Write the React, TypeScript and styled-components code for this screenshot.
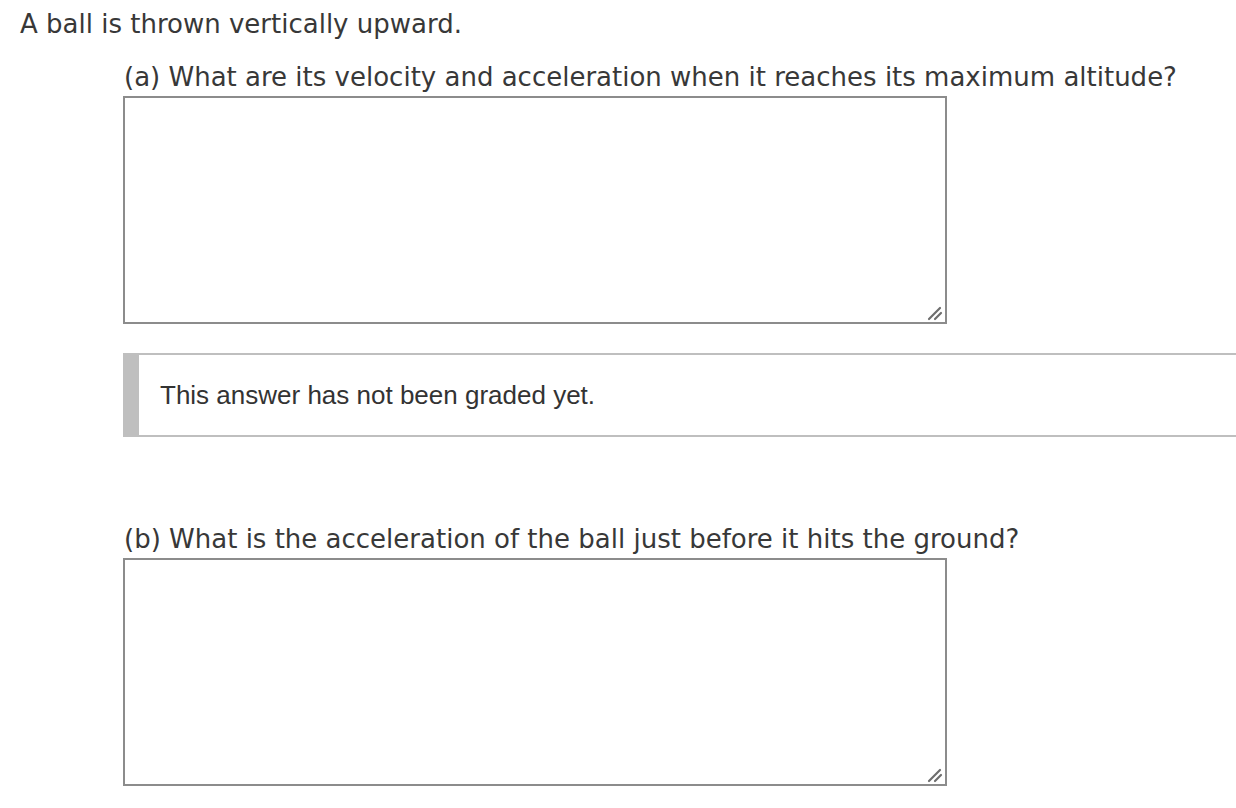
import React from 'react';
import styled, { createGlobalStyle } from 'styled-components';

const GlobalStyle = createGlobalStyle`
  html, body {
    margin: 0;
    padding: 0;
    background: #ffffff;
  }
  body {
    font-family: "DejaVu Sans", Verdana, sans-serif;
    color: #333333;
  }
`;

const Page = styled.div`
  padding-top: 8px;
`;

const Prompt = styled.div`
  font-size: 26px;
  line-height: 32px;
  padding-left: 20px;
  color: #383838;
`;

const Part = styled.div<{ $gap: number }>`
  margin-left: 123px;
  margin-top: ${(p) => p.$gap}px;
`;

const Question = styled.div`
  font-size: 26px;
  line-height: 32px;
  color: #383838;
  padding-left: 1px;
`;

const AnswerWrap = styled.div`
  position: relative;
  width: 824px;
  height: 228px;
  margin-top: 3px;
`;

const Answer = styled.textarea`
  display: block;
  box-sizing: border-box;
  width: 100%;
  height: 100%;
  margin: 0;
  border: 2px solid #8c8c8c;
  border-radius: 0;
  background: #ffffff;
  font-family: "DejaVu Sans", Verdana, sans-serif;
  font-size: 20px;
  outline: none;
  resize: none;
`;

const Grip = styled.svg`
  position: absolute;
  right: 4px;
  bottom: 3px;
  width: 16px;
  height: 16px;
  pointer-events: none;
`;

const Feedback = styled.div`
  box-sizing: border-box;
  display: flex;
  align-items: center;
  height: 84px;
  margin-top: 29px;
  border-top: 2px solid #bfbfbf;
  border-bottom: 2px solid #bfbfbf;
  border-left: 16px solid #bfbfbf;
  padding-left: 21px;
  font-family: "Liberation Sans", Arial, sans-serif;
  font-size: 26px;
  color: #333333;
`;

const AnswerBox = ({ label }: { label: string }) => (
  <AnswerWrap>
    <Answer aria-label={label} />
    <Grip viewBox="0 0 16 16">
      <path d="M2 14 L13 3 M8 14 L14 8" stroke="#6e6e6e" strokeWidth="2.2" strokeLinecap="round" />
    </Grip>
  </AnswerWrap>
);

export default function App() {
  return (
    <Page>
      <GlobalStyle />
      <Prompt>A ball is thrown vertically upward.</Prompt>
      <Part $gap={21}>
        <Question>(a) What are its velocity and acceleration when it reaches its maximum altitude?</Question>
        <AnswerBox label="Answer a" />
        <Feedback>This answer has not been graded yet.</Feedback>
      </Part>
      <Part $gap={86}>
        <Question>(b) What is the acceleration of the ball just before it hits the ground?</Question>
        <AnswerBox label="Answer b" />
      </Part>
    </Page>
  );
}
